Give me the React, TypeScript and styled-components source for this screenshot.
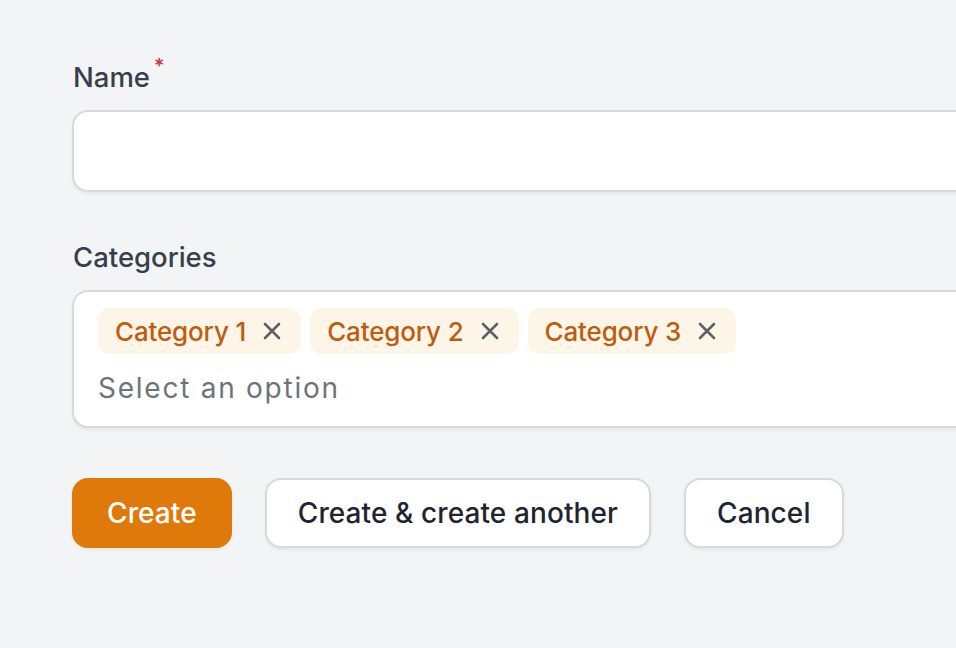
import React from "react";
import styled, { createGlobalStyle } from "styled-components";

const Global = createGlobalStyle`
  html, body {
    margin: 0;
    padding: 0;
    background: #f2f4f6;
    overflow: hidden;
  }
  body {
    font-family: "Inter", "Noto Sans", sans-serif;
  }
`;

const Page = styled.div`
  min-height: 648px;
  padding: 57px 0 0 72px;
  box-sizing: border-box;
`;

const Form = styled.form`
  width: 960px;
  display: flex;
  flex-direction: column;
  gap: 45px;
`;

const Field = styled.div`
  display: flex;
  flex-direction: column;
  gap: 13px;
`;

const Label = styled.label`
  display: block;
  height: 40px;
  font-size: 27.5px;
  line-height: 40px;
  font-weight: 500;
  color: #383f4c;
  padding-left: 1px;
`;

const Required = styled.span`
  display: inline-block;
  vertical-align: top;
  line-height: 20px;
  color: #d1303f;
  font-size: 20px;
  font-weight: 500;
  margin-left: 4px;
  margin-top: -1px;
`;

const TextInput = styled.div`
  height: 82px;
  background: #fff;
  border: 2px solid #d6d9dd;
  border-radius: 16px;
  box-shadow: 0 2px 3px rgba(0, 0, 0, 0.06);
  box-sizing: border-box;
`;

const SelectBox = styled.div`
  background: #fff;
  border: 2px solid #d6d9dd;
  border-radius: 16px;
  box-shadow: 0 2px 3px rgba(0, 0, 0, 0.06);
  box-sizing: border-box;
  padding: 16px 24px 18px 24px;
  display: flex;
  flex-direction: column;
  gap: 14px;
`;

const Tags = styled.div`
  display: flex;
  gap: 9px;
`;

const Tag = styled.span`
  display: inline-flex;
  align-items: center;
  height: 46px;
  padding: 0 19px 0 17px;
  gap: 16px;
  background: #fdf5e8;
  border-radius: 12px;
  color: #c05c0e;
  font-size: 26px;
  font-weight: 500;
  letter-spacing: -0.15px;
`;

const RemoveIcon = styled.svg`
  width: 20px;
  height: 20px;
  color: #5d6066;
`;

const Placeholder = styled.div`
  font-size: 28px;
  line-height: 40px;
  color: #6e737b;
  font-weight: 400;
  letter-spacing: 1.75px;
`;

const Actions = styled.div`
  display: flex;
  gap: 33px;
  margin-top: 5px;
`;

const Button = styled.button<{ $primary?: boolean }>`
  height: 70px;
  padding: 0 ${(p) => (p.$primary ? 35 : 31)}px;
  border-radius: 16px;
  font-family: inherit;
  font-size: 28px;
  font-weight: 500;
  letter-spacing: 0.1px;
  cursor: pointer;
  box-sizing: border-box;
  background: ${(p) => (p.$primary ? "#de790a" : "#fff")};
  color: ${(p) => (p.$primary ? "#fff" : "#1f2530")};
  border: ${(p) => (p.$primary ? "none" : "2px solid #d6d9dd")};
  box-shadow: 0 2px 3px rgba(0, 0, 0, 0.06);
`;

const X = () => (
  <RemoveIcon viewBox="0 0 20 20" fill="none" stroke="currentColor" strokeWidth={2.6} strokeLinecap="round">
    <path d="M3 3L17 17M17 3L3 17" />
  </RemoveIcon>
);

export default function App() {
  return (
    <>
      <Global />
      <Page>
        <Form onSubmit={(e) => e.preventDefault()}>
          <Field>
            <Label>
              Name<Required>*</Required>
            </Label>
            <TextInput />
          </Field>
          <Field>
            <Label>Categories</Label>
            <SelectBox>
              <Tags>
                {["Category 1", "Category 2", "Category 3"].map((c) => (
                  <Tag key={c}>
                    {c}
                    <X />
                  </Tag>
                ))}
              </Tags>
              <Placeholder>Select an option</Placeholder>
            </SelectBox>
          </Field>
          <Actions>
            <Button $primary>Create</Button>
            <Button>Create &amp; create another</Button>
            <Button>Cancel</Button>
          </Actions>
        </Form>
      </Page>
    </>
  );
}
